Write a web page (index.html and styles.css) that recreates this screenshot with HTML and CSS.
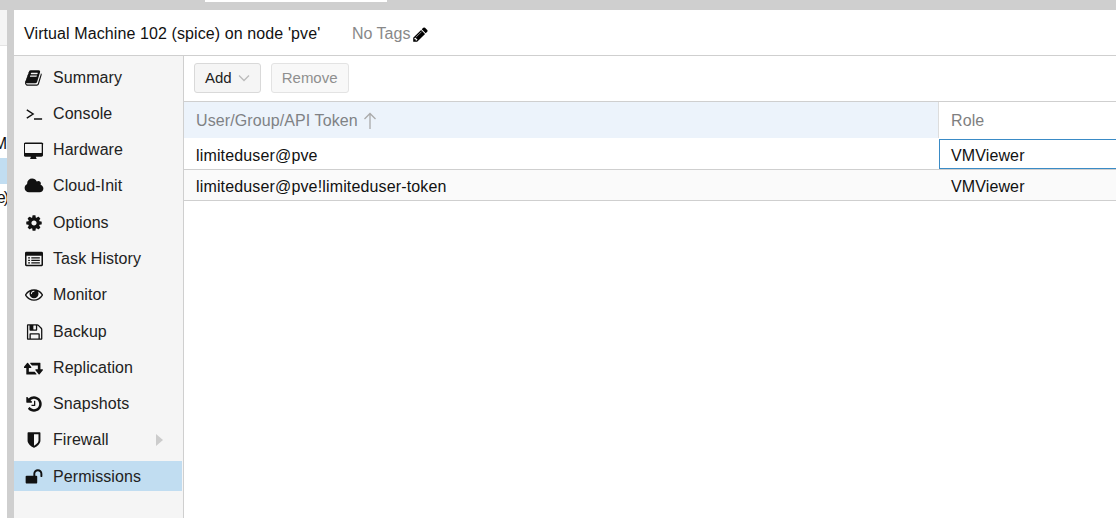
FILE: index.html
```html
<!DOCTYPE html>
<html lang="en">
<head>
<meta charset="utf-8">
<title>Virtual Machine 102</title>
<link rel="stylesheet" href="styles.css">
</head>
<body>
<div class="topbar"><div class="top-tab"></div></div>
<div class="workspace">
  <aside class="tree">
    <div class="tree-tools"></div>
    <div class="tree-body">
      <div class="tree-row tree-m">M</div>
      <div class="tree-row tree-sel"></div>
      <div class="tree-row tree-e">e)</div>
    </div>
  </aside>
  <main class="panel">
    <header class="title-bar">
      <span class="title">Virtual Machine 102 (spice) on node 'pve'</span>
      <span class="tags">No Tags</span>
      <svg class="pencil" viewBox="0 0 1792 1792"><path d="M491 1536l91-91-235-235-91 91v107h128v128h107zm523-928q0-22-22-22-10 0-17 7l-542 542q-7 7-7 17 0 22 22 22 10 0 17-7l542-542q7-7 7-17zm-54-192l416 416-832 832h-416v-416zm683 96q0 53-37 90l-166 166-416-416 166-165q36-38 90-38 53 0 91 38l235 234q37 39 37 91z"/></svg>
    </header>
    <div class="content">
      <nav class="nav">
        <a class="nav-item"><span class="ico"><svg viewBox="0 0 1792 1792"><path d="M1639 478q40 57 18 129l-275 906q-19 64-76.5 107.5t-122.5 43.5h-923q-77 0-148.5-53.5t-99.5-131.5q-24-67-2-127 0-4 3-27t4-37q1-8-3-21.5t-3-19.5q2-11 8-21t16.5-23.5 16.5-23.5q23-38 45-91.5t30-91.5q3-10 .5-30t-.5-28q3-11 17-28t17-23q21-36 42-92t25-90q1-9-2.5-32t.5-28q4-13 22-30.5t22-22.5q19-26 42.5-84.5t27.5-96.5q1-8-3-25.5t-2-26.5q2-8 9-18t18-23 17-21q8-12 16.5-30.5t15-35 16-36 19.5-32 26.5-23.5 36-11.5 47.5 5.5l-1 3q38-9 51-9h761q74 0 114 56t18 130l-274 906q-36 119-71.5 153.5t-128.5 34.5h-869q-27 0-38 15-11 16-1 43 24 70 144 70h923q29 0 56-15.5t35-41.5l300-987q7-22 5-57 38 15 59 43zm-1064 2q-4 13 2 22.5t20 9.5h608q13 0 25.5-9.5t16.5-22.5l21-64q4-13-2-22.5t-20-9.5h-608q-13 0-25.5 9.5t-16.5 22.5zm-83 256q-4 13 2 22.5t20 9.5h608q13 0 25.5-9.5t16.5-22.5l21-64q4-13-2-22.5t-20-9.5h-608q-13 0-25.5 9.5t-16.5 22.5z"/></svg></span>Summary</a>
        <a class="nav-item"><span class="ico"><svg viewBox="0 0 20 20"><path class="line" d="M2 5.500l7 4.500-7 4.500M10 15.500h9"/></svg></span>Console</a>
        <a class="nav-item"><span class="ico"><svg viewBox="0 0 1920 1792"><path d="M1728 992v-832q0-13-9.5-22.5t-22.5-9.5h-1600q-13 0-22.5 9.5t-9.5 22.5v832q0 13 9.5 22.5t22.5 9.5h1600q13 0 22.5-9.5t9.5-22.5zm128-832v1088q0 66-47 113t-113 47h-544q0 37 16 77.5t32 71 16 43.5q0 26-19 45t-45 19h-512q-26 0-45-19t-19-45q0-14 16-44t32-70 16-78h-544q-66 0-113-47t-47-113v-1088q0-66 47-113t113-47h1632q66 0 113 47t47 113z" transform="translate(0 160)"/></svg></span>Hardware</a>
        <a class="nav-item"><span class="ico"><svg viewBox="0 0 2048 1792"><path d="M1984 1152q0 159-112.5 271.5t-271.5 112.5h-1088q-185 0-316.5-131.5t-131.5-316.5q0-132 71-241.5t187-163.5q-2-28-2-43 0-212 150-362t362-150q158 0 286.5 88t187.5 230q70-62 166-62 106 0 181 75t75 181q0 75-41 138 129 30 213 134.5t84 239.5z"/></svg></span>Cloud-Init</a>
        <a class="nav-item"><span class="ico"><svg viewBox="0 0 1792 1792"><path d="M1152 896q0-106-75-181t-181-75-181 75-75 181 75 181 181 75 181-75 75-181zm512-109v222q0 12-8 23t-20 13l-185 28q-19 54-39 91 35 50 107 138 10 12 10 25t-9 23q-27 37-99 108t-94 71q-12 0-26-9l-138-108q-44 23-91 38-16 136-29 186-7 28-36 28h-222q-14 0-24.5-8.5t-11.5-21.5l-28-184q-49-16-90-37l-141 107q-10 9-25 9-14 0-25-11-126-114-165-168-7-10-7-23 0-12 8-23 15-21 51-66.5t54-70.5q-27-50-41-99l-183-27q-13-2-21-12.5t-8-23.5v-222q0-12 8-23t19-13l186-28q14-46 39-92-40-57-107-138-10-12-10-24 0-10 9-23 26-36 98.5-107.5t94.5-71.5q13 0 26 10l138 107q44-23 91-38 16-136 29-186 7-28 36-28h222q14 0 24.5 8.5t11.5 21.5l28 184q49 16 90 37l142-107q9-9 24-9 13 0 25 10 129 119 165 170 7 8 7 22 0 12-8 23-15 21-51 66.5t-54 70.5q26 50 41 98l183 28q13 2 21 12.5t8 23.5z"/></svg></span>Options</a>
        <a class="nav-item"><span class="ico"><svg viewBox="0 0 20 20"><path fill-rule="evenodd" d="M1.500 2h17q1.500 0 1.500 1.500v13q0 1.500-1.500 1.500h-17q-1.500 0-1.500-1.500v-13q0-1.500 1.500-1.500zm.2 4.500v9.500q0 .3.300.3h16q.3 0 .3-.3v-9.500zM3.500 8h2v1.500h-2zm0 2.800h2v1.500h-2zm0 2.800h2v1.500h-2zM7 8h9.500v1.500H7zm0 2.800h9.500v1.500H7zm0 2.800h9.500v1.500H7z"/></svg></span>Task History</a>
        <a class="nav-item"><span class="ico"><svg viewBox="0 0 1792 1792"><path d="M1664 960q-152-236-381-353 61 104 61 225 0 185-131.5 316.5t-316.5 131.5-316.5-131.5-131.5-316.5q0-121 61-225-229 117-381 353 133 205 333.5 326.5t434.5 121.5 434.5-121.5 333.5-326.5zm-720-384q0-20-14-34t-34-14q-125 0-214.5 89.5t-89.5 214.5q0 20 14 34t34 14 34-14 14-34q0-86 61-147t147-61q20 0 34-14t14-34zm848 384q0 34-20 69-140 230-376.5 368.5t-499.5 138.5-499.5-139-376.5-368q-20-35-20-69t20-69q140-229 376.5-368t499.5-139 499.5 139 376.5 368q20 35 20 69z" transform="translate(0 -64)"/></svg></span>Monitor</a>
        <a class="nav-item"><span class="ico"><svg viewBox="0 0 1792 1792"><path d="M512 1536h768v-384h-768v384zm896 0h128v-896q0-14-10-38.500t-20-34.500l-281-281q-10-10-34-20t-39-10v416q0 40-28 68t-68 28h-576q-40 0-68-28t-28-68v-416h-128v1280h128v-416q0-40 28-68t68-28h832q40 0 68 28t28 68v416zm-384-928v-320q0-13-9.500-22.500t-22.500-9.500h-192q-13 0-22.500 9.500t-9.500 22.500v320q0 13 9.500 22.500t22.500 9.500h192q13 0 22.500-9.500t9.500-22.500zm640 32v928q0 40-28 68t-68 28h-1344q-40 0-68-28t-28-68v-1344q0-40 28-68t68-28h928q40 0 88 20t76 48l280 280q28 28 48 76t20 88z" transform="translate(64 0)"/></svg></span>Backup</a>
        <a class="nav-item"><span class="ico"><svg viewBox="0 0 1920 1792"><path d="M1216 1504q0 13-9.500 22.500t-22.500 9.500h-960q-8 0-13.500-2t-9-7-5.500-8-3-11.500-1-11.500v-600h-192q-26 0-45-19t-19-45q0-24 15-41l320-384q19-22 49-22t49 22l320 384q15 17 15 41 0 26-19 45t-45 19h-192v384h576q16 0 25 11l160 192q7 10 7 21zm640-416q0 24-15 41l-320 384q-20 23-49 23t-49-23l-320-384q-15-17-15-41 0-26 19-45t45-19h192v-384h-576q-16 0-25-12l-160-192q-7-9-7-20 0-13 9.500-22.500t22.500-9.500h960q8 0 13.500 2t9 7 5.500 8 3 11.500 1 11.500v600h192q26 0 45 19t19 45z"/></svg></span>Replication</a>
        <a class="nav-item"><span class="ico"><svg viewBox="0 0 1792 1792"><path d="M1664 896q0 156-61 298t-164 245-245 164-298 61q-172 0-327-72.500t-264-204.500q-7-10-6.500-22.500t8.500-20.500l137-138q10-9 25-9 16 2 23 12 73 95 179 147t225 52q104 0 198.500-40.500t163.500-109.500 109.500-163.500 40.500-198.500-40.500-198.500-109.500-163.500-163.500-109.500-198.500-40.500q-98 0-188 35.500t-160 101.500l137 138q31 30 14 69-17 40-59 40h-448q-26 0-45-19t-19-45v-448q0-42 40-59 39-17 69 14l130 129q107-101 244.500-156.500t284.500-55.500q156 0 298 61t245 164 164 245 61 298zm-640-288v448q0 14-9 23t-23 9h-320q-14 0-23-9t-9-23v-64q0-14 9-23t23-9h224v-352q0-14 9-23t23-9h64q14 0 23 9t9 23z"/></svg></span>Snapshots</a>
        <a class="nav-item"><span class="ico"><svg viewBox="0 0 1792 1792"><path d="M1344 960v-640h-448v1137q119-63 213-137 235-184 235-360zm192-768v768q0 86-33.500 170.500t-83 150-118 127.500-126.500 103-121 77.500-89.500 49.500-42.500 20q-12 6-26 6t-26-6q-16-7-42.500-20t-89.500-49.500-121-77.500-126.500-103-118-127.500-83-150-33.500-170.500v-768q0-26 19-45t45-19h1152q26 0 45 19t19 45z"/></svg></span>Firewall<span class="caret"></span></a>
        <a class="nav-item active"><span class="ico"><svg viewBox="0 0 1792 1792"><path d="M1728 576v256q0 26-19 45t-45 19h-64q-26 0-45-19t-19-45v-256q0-106-75-181t-181-75-181 75-75 181v192h96q40 0 68 28t28 68v576q0 40-28 68t-68 28h-960q-40 0-68-28t-28-68v-576q0-40 28-68t68-28h672v-192q0-185 131.500-316.500t316.500-131.500 316.500 131.500 131.500 316.500z"/></svg></span>Permissions</a>
      </nav>
      <section class="main">
        <div class="toolbar">
          <button class="btn">Add<svg class="chev" viewBox="0 0 12 8"><path d="M1 1.500l5 5 5-5"/></svg></button>
          <button class="btn btn-off">Remove</button>
        </div>
        <div class="grid-head">
          <div class="col-a head-sorted">User/Group/API Token<svg class="sort" viewBox="0 0 14 18"><path d="M7 17V1.500M1.500 7L7 1.500 12.500 7"/></svg></div>
          <div class="col-b head-plain">Role</div>
        </div>
        <div class="row">
          <div class="col-a cell">limiteduser@pve</div>
          <div class="col-b cell cell-focus">VMViewer</div>
        </div>
        <div class="row row-alt">
          <div class="col-a cell">limiteduser@pve!limiteduser-token</div>
          <div class="col-b cell">VMViewer</div>
        </div>
      </section>
    </div>
  </main>
</div>
</body>
</html>
```
FILE: styles.css
```css
* { box-sizing: border-box; }
html, body { margin: 0; height: 518px; overflow: hidden; }
body {
  background: #cfcfcf;
  font-family: "Liberation Sans", Arial, sans-serif;
  font-size: 16px;
  color: #111;
  display: flex;
  flex-direction: column;
}
.topbar { height: 10px; flex: none; padding-left: 205px; }
.top-tab { width: 182px; height: 2px; background: #fff; }
.workspace { flex: 1; display: flex; gap: 7px; min-height: 0; }

.tree { width: 7px; flex: none; overflow: hidden; background: #fff; display: flex; flex-direction: column; }
.tree-tools { height: 36px; flex: none; background: #f5f5f5; border-bottom: 1px solid #e4e4e4; }
.tree-body { padding-top: 84px; }
.tree-row { height: 26px; width: 7px; display: flex; align-items: center; justify-content: flex-end; white-space: nowrap; }
.tree-m { height: 28px; }
.tree-sel { background: #c1ddf1; }
.tree-e { margin-top: 1px; letter-spacing: -2px; }

.panel { flex: 1; min-width: 0; display: flex; flex-direction: column; background: #fff; }
.title-bar { height: 46px; flex: none; display: flex; align-items: center; padding: 3px 0 0 10px; border-bottom: 1px solid #cfcfcf; }
.title { width: 328px; letter-spacing: .1px; }
.tags { color: #888; }
.pencil { width: 17px; height: 17px; margin-left: 2px; }

.content { flex: 1; display: flex; min-height: 0; }
.nav { width: 170px; flex: none; background: #f5f5f5; border-right: 1px solid #cfcfcf; padding-top: 6.2px; display: flex; flex-direction: column; gap: 6.27px; }
.nav-item { height: 30px; flex: none; display: flex; align-items: center; color: #222; padding-top: 1px; letter-spacing: .08px; }
.nav-item.active { background: #c1ddf1; margin-right: 1px; }
.ico { width: 39px; padding-left: 10px; flex: none; display: flex; align-items: center; }
.ico svg { width: 20px; height: 18px; fill: #111; display: block; }
.ico .line { fill: none; stroke: #111; stroke-width: 1.6; }
.caret { width: 0; height: 0; border-left: 7px solid #ccc; border-top: 6px solid transparent; border-bottom: 6px solid transparent; margin-left: 47px; }

.main { flex: 1; min-width: 0; overflow: hidden; background: #fff; }
.toolbar { height: 46px; display: flex; align-items: center; gap: 10px; padding: 0 0 2px 10px; border-bottom: 1px solid #cfcfcf; }
.btn { height: 30px; padding: 0 10px; font: inherit; font-size: 15px; color: #222; background: #f5f5f5; border: 1px solid #d9d9d9; border-radius: 3px; display: flex; align-items: center; }
.btn-off { color: #8f8f8f; background: #f8f8f8; border-color: #e3e3e3; }
.chev { width: 12px; height: 8px; margin-left: 6px; fill: none; stroke: #bbb; stroke-width: 1.3; }
.grid-head { height: 36px; display: flex; }
.row { height: 32px; display: flex; border-bottom: 1px solid #cfcfcf; }
.row-alt { height: 31px; background: #fafafa; }
.col-a { width: 754px; flex: none; padding: 4px 0 0 12px; display: flex; align-items: center; letter-spacing: .15px; }
.col-b { flex: 1; min-width: 194px; padding: 4px 0 0 13px; display: flex; align-items: center; letter-spacing: .12px; }
.head-sorted { background: #ecf3fb; color: #7f8285; letter-spacing: .1px; padding-top: 2px; }
.head-plain { color: #7f7f7f; border-left: 1px solid #ddd; padding: 2px 0 0 12px; }
.sort { width: 14px; height: 18px; margin-left: 5px; fill: none; stroke: #aaa; stroke-width: 1.3; }
.cell { color: #111; }
.cell-focus { border: 1px solid #3a8bc6; border-right: 0; margin: 1px 0 0 1px; padding-left: 11px; padding-top: 3px; }
```
